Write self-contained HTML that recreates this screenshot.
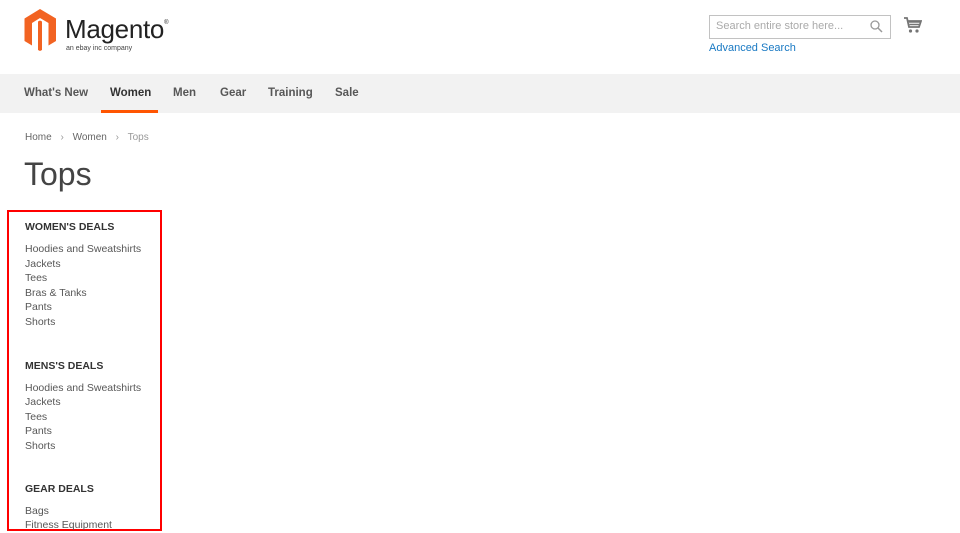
<!DOCTYPE html>
<html><head><meta charset="utf-8"><style>
*{margin:0;padding:0;box-sizing:border-box}
body{width:960px;height:531px;overflow:hidden;background:#fff;font-family:"Liberation Sans",sans-serif;color:#333;position:relative}
.abs{position:absolute}
.nav{position:absolute;left:0;top:74px;width:960px;height:39px;background:#f2f2f2}
.nav span{position:absolute;top:13px;font-size:11.5px;font-weight:bold;color:#575757}
.side a{display:block;font-size:10.5px;color:#575757;line-height:14.6px;text-decoration:none}
.side h4{font-size:10.5px;line-height:12px;font-weight:bold;color:#333;margin-bottom:9px}
</style></head><body>
<svg class="abs" style="left:24px;top:9px" width="34" height="42" viewBox="0 0 34 42">
<path d="M16 0 L32 9.5 V32 L24.5 36.5 V14 L16 9 L8 14 V36.5 L0.5 32 V9.5 Z" fill="#f26322"/>
<path d="M14 12.5 L16 11.5 L18 12.5 V41 L16 42 L14 41 Z" fill="#f26322"/>
</svg>
<div class="abs" style="left:65px;top:14px;font-size:26px;color:#222;letter-spacing:-0.3px">Magento<sup style="font-size:6px;vertical-align:14px">®</sup></div>
<div class="abs" style="left:66px;top:45px;font-size:7px;color:#444">an ebay inc company</div>
<div class="abs" style="left:709px;top:15px;width:182px;height:24px;border:1px solid #c2c2c2;background:#fff"></div>
<div class="abs" style="left:716px;top:20px;font-size:11px;color:#aaa">Search entire store here...</div>
<svg class="abs" style="left:870px;top:20px" width="13" height="13"><circle cx="5" cy="5" r="4" fill="none" stroke="#999" stroke-width="1.3"/><path d="M8 8 L12 12" stroke="#999" stroke-width="1.5"/></svg>
<div class="abs" style="left:709px;top:42px;font-size:11px;color:#1979c3">Advanced Search</div>
<svg class="abs" style="left:904px;top:17px" width="18" height="17" viewBox="0 0 18 17"><path d="M0 1 H3 L5 10 H15 L17 4 H4" fill="none" stroke="#757575" stroke-width="1.8"/><path d="M5 5 H16 M5.5 7.5 H15" stroke="#757575" stroke-width="1.5"/><circle cx="6.5" cy="14" r="1.6" fill="#757575"/><circle cx="13" cy="14" r="1.6" fill="#757575"/></svg>
<div class="nav">
<span style="left:24px">What's New</span>
<span style="left:110px;color:#333">Women</span>
<span style="left:173px">Men</span>
<span style="left:220px">Gear</span>
<span style="left:268px">Training</span>
<span style="left:335px">Sale</span>
<div class="abs" style="left:101px;top:36px;width:57px;height:3px;background:#ff5501"></div>
</div>
<div class="abs" style="left:25px;top:132px;font-size:10px;color:#666">Home <span style="color:#999;margin:0 6px">›</span> Women <span style="color:#999;margin:0 6px">›</span> <span style="color:#999">Tops</span></div>
<div class="abs" style="left:24px;top:156px;font-size:32px;color:#444">Tops</div>
<div class="abs" style="left:7px;top:210px;width:155px;height:321px;border:2px solid #f00"></div>
<div class="abs side" style="left:25px;top:221px;width:135px">
<h4>WOMEN'S DEALS</h4>
<a>Hoodies and Sweatshirts</a><a>Jackets</a><a>Tees</a><a>Bras &amp; Tanks</a><a>Pants</a><a>Shorts</a>
<h4 style="margin-top:30px">MENS'S DEALS</h4>
<a>Hoodies and Sweatshirts</a><a>Jackets</a><a>Tees</a><a>Pants</a><a>Shorts</a>
<h4 style="margin-top:29px">GEAR DEALS</h4>
<a>Bags</a><a>Fitness Equipment</a>
</div>
</body></html>
